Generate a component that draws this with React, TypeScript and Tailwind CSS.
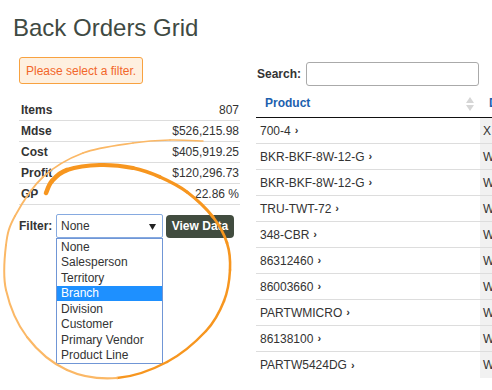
import React from "react";

type P = [number, number];

const pts: P[] = [
  [46, 193], [52, 181], [67, 170], [100, 165], [133, 168], [160, 177], [187, 192], [213, 217],
  [227, 243], [230, 270], [224, 301], [206, 331], [167, 362], [117, 378], [67, 370], [27, 337],
  [6, 290], [6, 245], [15, 216], [43, 177], [83, 153], [133, 143], [170, 140], [203, 141],
];

const widths = [4.5, 4.5, 4.2, 4, 3.6, 3.3, 3, 2.8, 2.6, 2.5, 2.5, 2.5, 2.4, 2.2, 2.1, 2, 2, 1.9, 1.8, 1.7, 1.6, 1.5, 1.4];

function segPath(i: number): string {
  const p0 = pts[Math.max(0, i - 1)];
  const p1 = pts[i];
  const p2 = pts[i + 1];
  const p3 = pts[Math.min(pts.length - 1, i + 2)];
  const c1x = p1[0] + (p2[0] - p0[0]) / 6;
  const c1y = p1[1] + (p2[1] - p0[1]) / 6;
  const c2x = p2[0] - (p3[0] - p1[0]) / 6;
  const c2y = p2[1] - (p3[1] - p1[1]) / 6;
  return `M${p1[0]},${p1[1]} C${c1x},${c1y} ${c2x},${c2y} ${p2[0]},${p2[1]}`;
}

function Scribble() {
  const segs = [];
  for (let i = 0; i < pts.length - 1; i++) {
    const dark = i < 13;
    segs.push(
      <path
        key={i}
        d={segPath(i)}
        fill="none"
        stroke={dark ? "#f7961f" : "#fbb866"}
        strokeWidth={widths[i]}
        strokeLinecap="round"
      />
    );
  }
  return (
    <svg className="absolute left-0 top-0 pointer-events-none" width="492" height="390" viewBox="0 0 492 390">
      {segs}
    </svg>
  );
}

const stats: [string, string][] = [
  ["Items", "807"],
  ["Mdse", "$526,215.98"],
  ["Cost", "$405,919.25"],
  ["Profit", "$120,296.73"],
  ["GP", "22.86 %"],
];

const options = ["None", "Salesperson", "Territory", "Branch", "Division", "Customer", "Primary Vendor", "Product Line"];

const rows: [string, string][] = [
  ["700-4", "X"],
  ["BKR-BKF-8W-12-G", "W"],
  ["BKR-BKF-8W-12-G", "W"],
  ["TRU-TWT-72", "W"],
  ["348-CBR", "W"],
  ["86312460", "W"],
  ["86003660", "W"],
  ["PARTWMICRO", "W"],
  ["86138100", "W"],
  ["PARTW5424DG", "W"],
];

export default function App() {
  return (
    <div className="relative w-[492px] h-[390px] overflow-hidden bg-white font-['Liberation_Sans',Arial,sans-serif] text-[#333]">
      <h1 className="ml-[13px] mt-[15px] text-[24px] leading-[26.4px] font-normal text-[#3f4a43]">Back Orders Grid</h1>
      <div className="flex mt-[15.6px]">
        <div className="relative ml-[19px] w-[221px] shrink-0">
          <div className="flex h-[27px] w-[124px] items-center rounded-[3px] border border-[#f8a240] bg-[#fef0e0] pl-[6px] text-[12px] text-[#f2672a]">
            Please select a filter.
          </div>
          <div className="mt-[16px]">
            {stats.map(([k, v]) => (
              <div key={k} className="flex h-[21px] items-center justify-between border-b border-[#ddd] pl-[2px] pr-[1px] text-[12px]">
                <span className="font-bold">{k}</span>
                <span>{v}</span>
              </div>
            ))}
          </div>
          <div className="mt-[9px] flex h-[24px] items-center text-[12px]">
            <span className="w-[37px] font-bold">Filter:</span>
            <div className="relative flex h-[24px] w-[107px] items-center rounded-[2px] border border-[#86aae0] bg-white pl-[4px] text-[12px]">
              None
              <svg className="absolute right-[6px] top-[9px]" width="7" height="6" viewBox="0 0 7 6">
                <path d="M0,0 L7,0 L3.5,6 Z" fill="#222" />
              </svg>
            </div>
            <div className="ml-[3px] flex h-[23px] w-[68px] items-center justify-center rounded-[4px] bg-[#414c3f] font-bold text-white">
              View Data
            </div>
          </div>
          <div className="absolute left-[37px] top-[181px] w-[107px] border border-[#7096d6] bg-white text-[12px]">
            {options.map((o) => (
              <div
                key={o}
                className={
                  o === "Branch"
                    ? "flex h-[15.5px] items-center bg-[#1e90ff] pl-[4px] text-white"
                    : "flex h-[15.5px] items-center pl-[4px] text-[#333]"
                }
              >
                {o}
              </div>
            ))}
          </div>
        </div>
        <div className="ml-[16px] min-w-0 flex-1 overflow-hidden">
          <div className="mt-[5px] flex h-[24px] items-center text-[12px]">
            <span className="w-[50px] shrink-0 pl-[1px] font-bold">Search:</span>
            <div className="h-[24px] w-[173px] shrink-0 rounded-[3px] border border-[#aaa]" />
          </div>
          <div className="w-[400px]">
            <div className="flex h-[32px] border-b border-[#111] text-[12px] font-bold text-[#1c5fae]">
              <div className="relative w-[224px] shrink-0 pl-[9px] pt-[10px] leading-[14px]">
                Product
                <svg className="absolute right-[6px] top-[11px]" width="8" height="14" viewBox="0 0 8 14">
                  <path d="M4,0 L8,6 L0,6 Z" fill="#d6d6d6" />
                  <path d="M0,8 L8,8 L4,14 Z" fill="#d6d6d6" />
                </svg>
              </div>
              <div className="pl-[9px] pt-[10px] leading-[14px]">Description</div>
            </div>
            {rows.map(([p, d], i) => (
              <div
                key={i}
                className={
                  i === rows.length - 1
                    ? "flex h-[26px] text-[12px]"
                    : "flex h-[26px] border-b border-[#ddd] text-[12px]"
                }
              >
                <div className="flex w-[224px] shrink-0 items-center pl-[4px]">
                  {p} <span className="ml-[4px] text-[11px] font-bold">›</span>
                </div>
                <div className="flex flex-1 items-center bg-[#f1f1f1] pl-[3px]">{d}</div>
              </div>
            ))}
          </div>
        </div>
      </div>
      <Scribble />
    </div>
  );
}
